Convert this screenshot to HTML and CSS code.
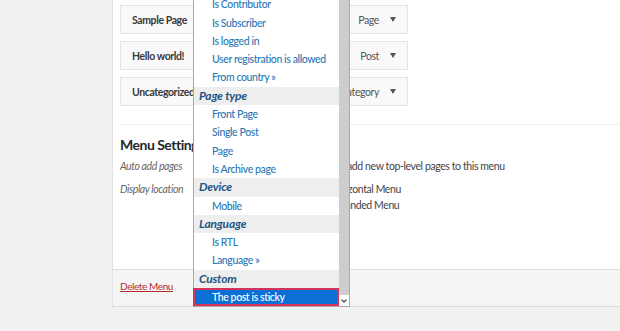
FILE: index.html
```html
<!DOCTYPE html>
<html>
<head>
<meta charset="utf-8">
<link rel="stylesheet" href="styles.css">
</head>
<body>
<div class="page">
  <div class="panel">
    <div class="panel-body">
      <ul class="items">
        <li class="item"><span class="item-title">Sample Page</span><span class="item-controls"><span class="item-type">Page</span><span class="caret"></span></span></li>
        <li class="item"><span class="item-title">Hello world!</span><span class="item-controls"><span class="item-type">Post</span><span class="caret"></span></span></li>
        <li class="item"><span class="item-title">Uncategorized</span><span class="item-controls"><span class="item-type">Category</span><span class="caret"></span></span></li>
      </ul>
      <div class="sep"></div>
      <h3 class="settings-title">Menu Settings</h3>
      <div class="setting">
        <span class="setting-label">Auto add pages</span>
        <div class="setting-value">
          <label class="check"><span class="box"></span>Automatically add new top-level pages to this menu</label>
        </div>
      </div>
      <div class="setting setting-locations">
        <span class="setting-label">Display location</span>
        <div class="setting-value">
          <label class="check"><span class="box"></span>Desktop Horizontal Menu</label>
          <label class="check"><span class="box"></span>Desktop Expanded Menu</label>
        </div>
      </div>
    </div>
    <div class="panel-footer">
      <a class="delete" href="#">Delete Menu</a>
    </div>
  </div>

  <div class="dropdown">
    <ul class="options">
      <li class="opt">Is Author</li>
      <li class="opt">Is Contributor</li>
      <li class="opt">Is Subscriber</li>
      <li class="opt">Is logged in</li>
      <li class="opt">User registration is allowed</li>
      <li class="opt">From country »</li>
      <li class="group">Page type</li>
      <li class="opt">Front Page</li>
      <li class="opt">Single Post</li>
      <li class="opt">Page</li>
      <li class="opt">Is Archive page</li>
      <li class="group">Device</li>
      <li class="opt">Mobile</li>
      <li class="group">Language</li>
      <li class="opt">Is RTL</li>
      <li class="opt">Language »</li>
      <li class="group">Custom</li>
      <li class="opt selected">The post is sticky</li>
    </ul>
    <div class="scrollbar">
      <div class="thumb"></div>
      <div class="arrow"><svg width="10" height="11" viewBox="0 0 10 11"><polyline points="2.5,4.5 5,7 7.5,4.5" fill="none" stroke="#555" stroke-width="1.4"/></svg></div>
    </div>
  </div>
</div>
</body>
</html>
```
FILE: styles.css
```css
* { box-sizing: border-box; }
html, body { margin: 0; padding: 0; }
body {
  background: #f1f1f1;
  font-family: Lato, "Open Sans", sans-serif;
  font-size: 10.5px;
  letter-spacing: -0.4px;
  color: #444;
  width: 620px;
  height: 331px;
  overflow: hidden;
}
.page {
  position: relative;
  padding-left: 112px;
}
.panel {
  background: #fff;
  border-left: 1px solid #e2e2e2;
  border-bottom: 1px solid #dcdcdc;
  height: 307px;
  display: flex;
  flex-direction: column;
}
.panel-body {
  flex: 1;
  padding: 5px 0 0 7px;
}
.items {
  list-style: none;
  margin: 0;
  padding: 0;
  display: flex;
  flex-direction: column;
  gap: 7px;
}
.item {
  width: 288px;
  height: 29px;
  border: 1px solid #e4e4e4;
  background: #f9f9f9;
  display: flex;
  align-items: center;
  justify-content: space-between;
  padding: 0 9px 0 11px;
}
.item-title {
  font-weight: 700;
  color: #3a3a3a;
  font-size: 10.5px;
}
.item-controls {
  display: flex;
  align-items: center;
  gap: 11px;
  color: #555;
  font-size: 10.5px;
}
.caret {
  width: 0;
  height: 0;
  border-left: 3.5px solid transparent;
  border-right: 3.5px solid transparent;
  border-top: 5px solid #555;
  margin-right: 2px;
}
.sep {
  height: 1px;
  background: #eeeeee;
  margin-top: 18px;
}
.settings-title {
  margin: 11px 0 0;
  font-size: 14px;
  letter-spacing: -0.5px;
  font-weight: 700;
  color: #23282d;
  line-height: 18px;
}
.setting {
  display: grid;
  grid-template-columns: 149px 1fr;
  margin-top: 4px;
  line-height: 16px;
}
.setting-locations {
  margin-top: 7px;
  grid-template-columns: 153px 1fr;
}
.setting-label {
  font-style: italic;
  color: #666;
  font-size: 10.5px;
}
.setting-value {
  display: flex;
  flex-direction: column;
}
.check {
  display: flex;
  align-items: center;
  gap: 4px;
  color: #444;
  font-size: 10.5px;
  white-space: nowrap;
}
.box {
  width: 14px;
  height: 14px;
  border: 1px solid #b4b9be;
  background: #fff;
}
.panel-footer {
  height: 37px;
  background: #f5f5f5;
  border-top: 1px solid #dddddd;
  display: flex;
  align-items: center;
  padding-left: 7px;
  padding-bottom: 4px;
}
.delete {
  color: #b32d2e;
  text-decoration: underline;
  font-size: 10px;
}

/* dropdown */
.dropdown {
  position: absolute;
  left: 193px;
  top: -23px;
  width: 157px;
  height: 330px;
  display: flex;
  background: #fff;
  border: 1px solid #a9a9a9;
  border-top: none;
}
.options {
  list-style: none;
  margin: 0;
  padding: 0;
  width: 145px;
  flex: none;
}
.opt, .group {
  height: 18.3px;
  line-height: 18.3px;
  white-space: nowrap;
  overflow: hidden;
}
.opt {
  padding-left: 18px;
  color: #2b78b4;
  font-size: 10.5px;
  font-weight: 500;
}
.group {
  padding-left: 5px;
  background: #eeeeee;
  color: #1e5484;
  font-weight: 700;
  font-style: italic;
  font-size: 12px;
  letter-spacing: -0.2px;
}
.opt.selected {
  background: #0b6fd6;
  color: #fff;
  border: 2px solid #d6335a;
  margin-left: -1px;
  padding-left: 17px;
  line-height: 14.3px;
}
.scrollbar {
  flex: 1;
  display: flex;
  flex-direction: column;
  background: #fff;
}
.thumb {
  flex: 1;
  background: #cdcdcd;
}
.arrow {
  height: 11px;
  background: #fff;
  display: flex;
  justify-content: center;
}
```
